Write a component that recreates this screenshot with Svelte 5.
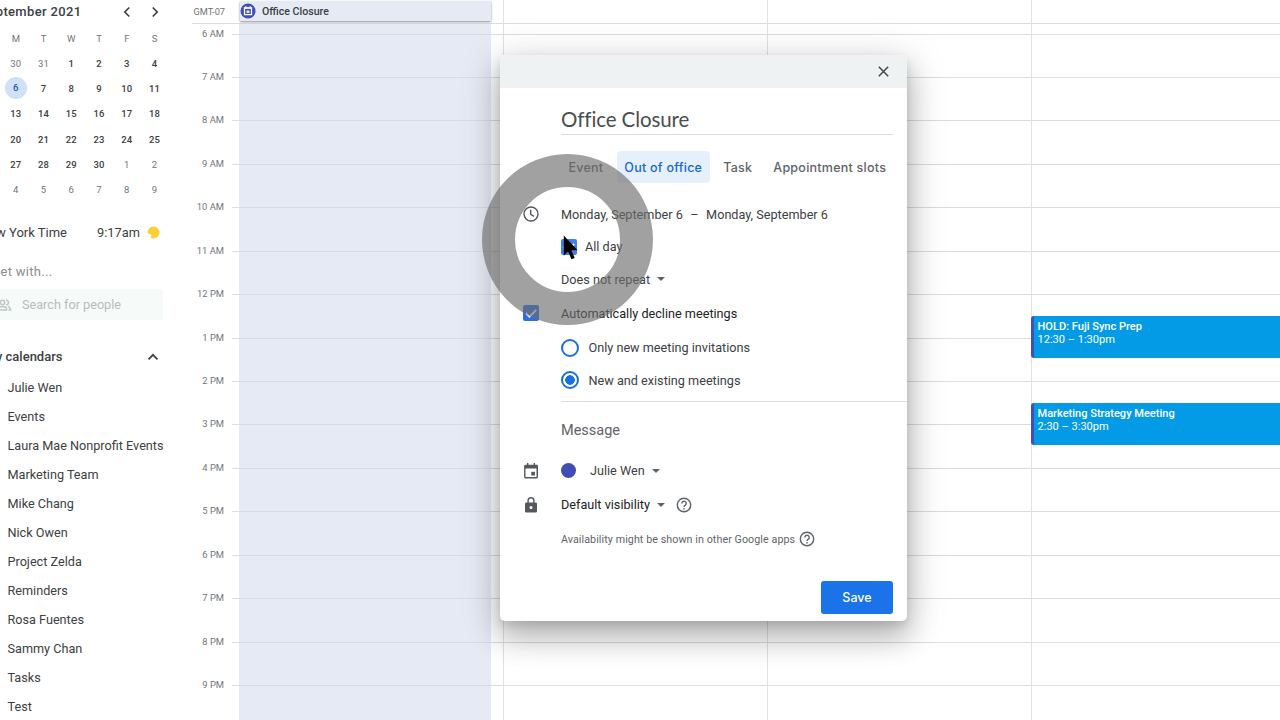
<script>
    const weekdays = ['M', 'T', 'W', 'T', 'F', 'S'];
    const weeks = [
        [30, 31, 1, 2, 3, 4],
        [6, 7, 8, 9, 10, 11],
        [13, 14, 15, 16, 17, 18],
        [20, 21, 22, 23, 24, 25],
        [27, 28, 29, 30, 1, 2],
        [4, 5, 6, 7, 8, 9]
    ];
    const calendars = [
        'Julie Wen', 'Events', 'Laura Mae Nonprofit Events', 'Marketing Team', 'Mike Chang', 'Nick Owen',
        'Project Zelda', 'Reminders', 'Rosa Fuentes', 'Sammy Chan', 'Tasks', 'Test'
    ];
    const hours = [
        '6 AM', '7 AM', '8 AM', '9 AM', '10 AM', '11 AM', '12 PM', '1 PM',
        '2 PM', '3 PM', '4 PM', '5 PM', '6 PM', '7 PM', '8 PM', '9 PM'
    ];
    const events = [
        { title: 'HOLD: Fuji Sync Prep', time: '12:30 – 1:30pm' },
        { title: 'Marketing Strategy Meeting', time: '2:30 – 3:30pm' }
    ];

    let tab = $state('Out of office');
    let decline = $state('New and existing meetings');

    const tabs = ['Event', 'Out of office', 'Task', 'Appointment slots'];
    const choices = ['Only new meeting invitations', 'New and existing meetings'];

    function otherMonth(week, day) {
        return (week === 0 && day > 20) || (week > 3 && day < 15);
    }
</script>

{#snippet caret()}
    <svg class="caret" width="8" height="4" viewBox="0 0 8 4"><path d="M0 0h8L4 4z" /></svg>
{/snippet}

{#snippet check()}
    <span class="check"><svg width="16" height="16" viewBox="0 0 16 16"><path d="m3 8 3.5 3.6L13.2 5" /></svg></span>
{/snippet}

{#snippet help()}
    <svg class="help" width="16" height="16" viewBox="0 0 16 16">
        <circle cx="8" cy="8" r="6.7" />
        <path d="M5.8 6.4a2.2 2.2 0 1 1 3.6 1.7C8.6 8.7 8 9 8 10" />
        <path d="M8 11.1v1.4" />
    </svg>
{/snippet}

<div class="app">
    <aside>
        <div class="month">
            <h2>September 2021</h2>
            <svg width="8" height="12" viewBox="0 0 8 12"><path d="M6.3 1.5 1.8 6l4.5 4.5" /></svg>
            <svg width="8" height="12" viewBox="0 0 8 12"><path d="M1.7 1.5 6.2 6l-4.5 4.5" /></svg>
        </div>
        <div class="days head">
            {#each weekdays as name}
                <span>{name}</span>
            {/each}
        </div>
        {#each weeks as week, w}
            <div class="days">
                {#each week as day}
                    <span class:muted={otherMonth(w, day)} class:today={w === 1 && day === 6}>{day}</span>
                {/each}
            </div>
        {/each}

        <div class="zone">
            <span class="name">New York Time</span>
            <span class="clock">9:17am</span>
            <svg width="13" height="13" viewBox="0 0 13 13">
                <path fill="#fbd034" d="M6.5.5a6 6 0 1 1-3.200 11.100c1.200-.8 1.500-2 .8-2.800-.6-.8-1.500-.3-1.900-1C1.800 7 1.100 7.100.6 7.500A6 6 0 0 1 6.500.5z" />
            </svg>
        </div>
        <div class="meet"><span>Meet with...</span></div>
        <div class="search">
            <svg width="13" height="14" viewBox="0 0 13 14">
                <circle cx="2.5" cy="4.5" r="2.2" />
                <path d="M-2 12v-1c0-1.500 2-2.400 4.500-2.400s4 1 4 2.400v1zM6 2a2.500 2.500 0 0 1 0 5M8 8.600c1.800.5 2.500 1.200 2.500 3.400h-2" />
            </svg>
            <span>Search for people</span>
        </div>
        <div class="mine">
            <h3>My calendars</h3>
            <svg width="12" height="8" viewBox="0 0 12 8"><path d="M1.5 6.3 6 1.8l4.5 4.5" /></svg>
        </div>
        <ul>
            {#each calendars as name}
                <li>{name}</li>
            {/each}
        </ul>
    </aside>

    <main>
        <div class="allday">
            <span class="gmt">GMT-07</span>
            <div class="closure">
                <svg width="16" height="16" viewBox="0 0 16 16">
                    <circle cx="8" cy="8" r="7.5" fill="#3f4db5" />
                    <path d="M4.5 4.6h7v7h-7z" fill="none" stroke="#fff" stroke-width="1.3" />
                    <path d="M4 4h8v2H4zM5.300 3h1.200v1.500H5.300zM9.500 3h1.200v1.500H9.500zM6.500 7.500h3v2.500h-3z" fill="#e6eaf4" />
                </svg>
                <span>Office Closure</span>
            </div>
            <div class="cell"></div>
            <div class="cell"></div>
            <div class="cell"></div>
        </div>
        <div class="schedule">
            <div class="columns">
                <div class="out"></div>
                <div class="column"></div>
                <div class="column"></div>
                <div class="column"></div>
            </div>
            <div class="hours">
                {#each hours as hour}
                    <div class="hour"><span>{hour}</span><i></i></div>
                {/each}
            </div>
            <div class="events">
                {#each events as event}
                    <div class="event">
                        <b>{event.title}</b>
                        <span>{event.time}</span>
                    </div>
                {/each}
            </div>
        </div>
    </main>

    <div class="dialog">
        <header>
            <svg width="11" height="11" viewBox="0 0 11 11"><path d="m.8.8 9.400 9.400M10.200.8.8 10.200" /></svg>
        </header>
        <div class="title">Office Closure</div>
        <nav>
            {#each tabs as name}
                <button class:active={tab === name} onclick={() => (tab = name)}>{name}</button>
            {/each}
        </nav>
        <div class="row date">
            <div class="icon">
                <svg width="16" height="16" viewBox="0 0 16 16" class="line">
                    <circle cx="8" cy="8" r="7" />
                    <path d="M7.700 3.800v4.500l3.300 2" />
                </svg>
            </div>
            <div class="range">
                <span>Monday, September 6</span>
                <span>–</span>
                <span>Monday, September 6</span>
            </div>
        </div>
        <div class="row all">
            <div class="icon"></div>
            {@render check()}
            <span class="beside">All day</span>
        </div>
        <div class="row">
            <div class="icon"></div>
            <span>Does not repeat</span>
            {@render caret()}
        </div>
        <div class="row auto">
            <div class="icon">{@render check()}</div>
            <span>Automatically decline meetings</span>
        </div>
        {#each choices as choice}
            <div class="row choice">
                <div class="icon"></div>
                <button class="radio" class:on={decline === choice} aria-label={choice} onclick={() => (decline = choice)}></button>
                <span>{choice}</span>
            </div>
        {/each}
        <div class="message">Message</div>
        <div class="row owner">
            <div class="icon">
                <svg width="14" height="16" viewBox="0 0 14 16" fill="#55585c">
                    <path fill-rule="evenodd" d="M1.500 1.800H3V0h1.400v1.800h5.200V0H11v1.800h1.500A1.400 1.400 0 0 1 14 3.200v10.900a1.400 1.400 0 0 1-1.400 1.400H1.500A1.400 1.400 0 0 1 .1 14.100V3.200a1.400 1.400 0 0 1 1.400-1.400zM1.500 5.500v8.600h11V5.500z" />
                    <path d="M7.300 8.800H11v3.700H7.300z" />
                </svg>
            </div>
            <span class="dot"></span>
            <span class="who">Julie Wen</span>
            {@render caret()}
        </div>
        <div class="row visibility">
            <div class="icon">
                <svg width="12" height="16" viewBox="0 0 12 16" fill="#55585c">
                    <path fill-rule="evenodd" d="M1.400 5.400h1V3.700a3.600 3.600 0 0 1 7.200 0v1.700h1A1.400 1.400 0 0 1 12 6.800v7.400a1.400 1.400 0 0 1-1.400 1.400H1.400A1.400 1.400 0 0 1 0 14.200V6.800a1.400 1.400 0 0 1 1.400-1.400zM3.800 5.400h4.400V3.700a2.200 2.200 0 0 0-4.400 0zM6 9a1.500 1.500 0 1 0 0 3 1.500 1.500 0 0 0 0-3z" />
                </svg>
            </div>
            <span>Default visibility</span>
            {@render caret()}
            {@render help()}
        </div>
        <div class="row note">
            <div class="icon"></div>
            <span>Availability might be shown in other Google apps</span>
            {@render help()}
        </div>
        <footer><button class="save">Save</button></footer>
    </div>

    <div class="ring"></div>
    <svg class="pointer" width="16" height="26" viewBox="0 0 16 26"><path d="M.8.5v20.200l4.300-4.100 3.400 7.700 3.200-1.400-3.400-7.600h6.200z" /></svg>
</div>

<style>
    :global(body) {
        background: #fff;
    }

    .app {
        position: relative;
        display: flex;
        width: 1280px;
        height: 720px;
        overflow: hidden;
        font-family: Roboto, "Liberation Sans", sans-serif;
        font-size: 12.67px;
        color: #3c4043;
        background: #fff;
    }

    svg {
        display: block;
        flex: none;
    }

    button {
        font: inherit;
        border: 0;
        padding: 0;
        background: none;
    }

    aside {
        width: 190px;
        flex: none;
        overflow: hidden;
    }

    .month {
        display: flex;
        align-items: center;
        height: 23px;
    }

    h2,
    h3 {
        margin: 0;
        font-size: 13px;
        font-weight: 500;
        display: flex;
        justify-content: flex-end;
        white-space: nowrap;
    }

    h2 {
        width: 81.5px;
        margin-right: 41.5px;
        letter-spacing: 0.35px;
    }

    .month svg + svg {
        margin-left: 20px;
    }

    .month path,
    .mine path {
        fill: none;
        stroke: #3c4043;
        stroke-width: 1.7;
    }

    .days {
        display: grid;
        grid-template-columns: repeat(6, 27.75px);
        margin-left: 2px;
        height: 25.3px;
        align-items: center;
        justify-items: center;
        font-size: 9.5px;
        font-weight: 500;
        letter-spacing: 0.2px;
    }

    .days.head {
        height: 27.5px;
        padding-top: 3.5px;
        box-sizing: border-box;
        font-weight: 400;
        color: #70757a;
    }

    .days .muted {
        font-weight: 400;
        color: #70757a;
    }

    .days .today {
        width: 22px;
        line-height: 22px;
        text-align: center;
        border-radius: 50%;
        background: #d0e1fa;
        color: #1a55b8;
    }

    .zone {
        display: flex;
        align-items: center;
        height: 20px;
        margin-top: 20px;
        font-size: 13px;
    }

    .name {
        display: flex;
        justify-content: flex-end;
        width: 67px;
        white-space: nowrap;
    }

    .clock {
        width: 50px;
        margin-left: 30px;
        font-size: 12.8px;
    }

    .meet {
        display: flex;
        justify-content: flex-end;
        width: 52.5px;
        margin-top: 22px;
        line-height: 16px;
        white-space: nowrap;
        font-size: 13px;
        color: #8a8d91;
        letter-spacing: 0.3px;
    }

    .search {
        display: flex;
        align-items: center;
        gap: 9px;
        width: 162.5px;
        height: 31px;
        margin-top: 9px;
        background: #f6faf9;
        color: #b9bdbf;
    }

    .search path,
    .search circle {
        fill: none;
        stroke: #c0c6c8;
        stroke-width: 1.5;
    }

    .mine {
        display: flex;
        align-items: center;
        height: 20px;
        margin-top: 26.5px;
    }

    h3 {
        width: 62.5px;
        margin-right: 84.5px;
    }

    ul {
        list-style: none;
        margin: 7.6px 0 0 7.5px;
        padding: 0;
    }

    li {
        line-height: 28.95px;
        white-space: nowrap;
    }

    main {
        flex: 1;
        min-width: 0;
    }

    .allday {
        display: flex;
        height: 23px;
        border-bottom: 1px solid #dadce0;
        margin-left: 2px;
    }

    .allday > * {
        flex: none;
    }

    .gmt {
        width: 47px;
        font-size: 9.2px;
        line-height: 23px;
        color: #70757a;
        text-indent: 1.5px;
    }

    .closure {
        display: flex;
        align-items: center;
        gap: 6px;
        width: 251px;
        height: 20px;
        margin: 1px 12px 0 1px;
        background: #e6eaf4;
        box-shadow: 0 1px 2px rgba(60, 64, 80, 0.6);
        font-size: 10.6px;
        font-weight: 500;
    }

    .cell {
        width: 263px;
        border-left: 1px solid #dfe1e5;
    }

    .schedule,
    .columns {
        display: grid;
    }

    .schedule {
        height: 696px;
        overflow: hidden;
    }

    .columns,
    .hours,
    .events {
        grid-area: 1 / 1;
    }

    .columns {
        grid-template-columns: 252px 264px 264px 1fr;
        margin-left: 49px;
    }

    .out {
        background: #e6eaf4;
    }

    .column {
        margin-left: 12px;
        margin-right: -12px;
        border-left: 1px solid #dfe1e5;
    }

    .hours {
        padding-top: 3.6px;
    }

    .hour {
        display: flex;
        align-items: flex-start;
        height: 43.43px;
        font-size: 9.4px;
        color: #70757a;
    }

    .hour span {
        width: 34px;
        line-height: 12px;
        text-align: right;
    }

    .hour i {
        flex: 1;
        height: 1px;
        margin: 6px 0 0 8px;
        background: #dadce0;
    }

    .events {
        display: flex;
        flex-direction: column;
        gap: 45.5px;
        padding: 292px 0 0 840.5px;
    }

    .event {
        box-sizing: border-box;
        height: 41.5px;
        padding: 4px 0 0 4px;
        border-left: 3.5px solid #3f51b5;
        border-radius: 3px 0 0 3px;
        background: #039be5;
        color: #fff;
        font-size: 11.05px;
        line-height: 13.3px;
    }

    .event b,
    .event span {
        display: block;
    }

    .event b {
        font-weight: 500;
    }

    .dialog {
        position: absolute;
        left: 500px;
        top: 55px;
        width: 407px;
        height: 565.5px;
        border-radius: 5px;
        background: #fff;
        box-shadow: 0 16px 28px 2px rgba(0, 0, 0, 0.22), 0 6px 42px 4px rgba(0, 0, 0, 0.12), 0 4px 8px rgba(0, 0, 0, 0.1);
    }

    header {
        display: flex;
        align-items: center;
        justify-content: flex-end;
        height: 33px;
        padding-right: 18px;
        border-radius: 5px 5px 0 0;
        background: #eff2f3;
    }

    header path {
        stroke: #44474a;
        stroke-width: 1.5;
    }

    .title {
        height: 46px;
        margin: 0 14px 0 61px;
        border-bottom: 1px solid #dadce0;
        font-family: Lato, Roboto, sans-serif;
        font-size: 20.5px;
        font-variant-ligatures: none;
        letter-spacing: -0.1px;
        line-height: 63px;
        color: #4a4d51;
    }

    nav {
        display: flex;
        margin: 16px 0 0 61px;
    }

    nav button {
        height: 32px;
        padding: 0 7.5px;
        border-radius: 4px;
        font-family: Inter, Roboto, sans-serif;
        font-size: 12.5px;
        font-weight: 500;
        letter-spacing: 0.25px;
        color: #5f6368;
        margin-right: 6px;
        white-space: nowrap;
    }

    nav .active {
        background: #e6f0fc;
        color: #1967d2;
    }

    .row {
        display: flex;
        align-items: center;
        height: 32.5px;
        white-space: nowrap;
    }

    .icon {
        display: flex;
        justify-content: center;
        width: 61px;
        flex: none;
    }

    .line {
        fill: none;
        stroke: #55585c;
        stroke-width: 1.4;
    }

    .date {
        margin-top: 14.8px;
    }

    .range {
        display: flex;
        gap: 7.5px;
    }

    .check {
        width: 16px;
        height: 16px;
        border-radius: 2px;
        background: #2b6fe3;
    }

    .all .check {
        background: #4080ee;
    }

    .check path {
        fill: none;
        stroke: #fff;
        stroke-width: 1.8;
    }

    .beside {
        margin-left: 8px;
    }

    .caret {
        margin-left: 7px;
        fill: #5f6368;
    }

    .auto {
        height: 36px;
        color: #202124;
    }

    .choice span {
        margin-left: 9.5px;
    }

    .radio {
        width: 18px;
        height: 18px;
        border: 2px solid #1a6fe0;
        border-radius: 50%;
    }

    .radio.on {
        background: radial-gradient(circle, #1a6fe0 4.5px, transparent 5px);
    }

    .message {
        height: 56px;
        margin: 4.7px 0 0 61px;
        border-top: 1px solid #dadce0;
        font-size: 14.5px;
        line-height: 57px;
        color: #5f6368;
    }

    .owner {
        margin-top: -3.7px;
    }

    .dot {
        width: 15px;
        height: 15px;
        border-radius: 50%;
        background: #3f4db5;
    }

    .who {
        margin-left: 14px;
    }

    .visibility {
        height: 36px;
        color: #202124;
    }

    .help {
        fill: none;
        stroke: #5f6368;
        stroke-width: 1.4;
        margin-left: 11.5px;
    }

    .note {
        font-size: 10.7px;
        letter-spacing: 0.08px;
        color: #5f6368;
    }

    .note .help {
        margin-left: 3.5px;
    }

    footer {
        display: flex;
        justify-content: flex-end;
        padding: 25.7px 14px 0 0;
    }

    .save {
        width: 72px;
        height: 33px;
        border-radius: 3px;
        background: #1a73e8;
        color: #fff;
        font-family: Inter, Roboto, sans-serif;
        font-size: 12.5px;
        font-weight: 500;
    }

    .ring {
        position: absolute;
        left: 482px;
        top: 153.5px;
        box-sizing: border-box;
        width: 171px;
        height: 171px;
        border: 33px solid rgba(108, 108, 108, 0.64);
        border-radius: 50%;
    }

    .pointer {
        position: absolute;
        left: 563px;
        top: 235px;
    }
</style>
